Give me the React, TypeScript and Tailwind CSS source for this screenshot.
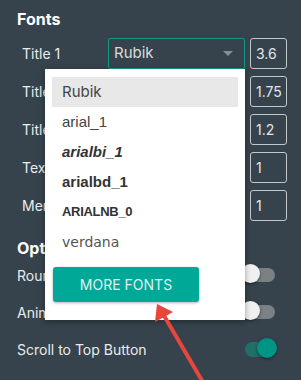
import React from "react";

const fontRows = [
  { label: "Title 1", size: "3.6" },
  { label: "Title 2", size: "1.75" },
  { label: "Title 3", size: "1.2" },
  { label: "Text", size: "1" },
  { label: "Menu", size: "1" },
];

const options = [
  { label: "Rounded Corners", on: false },
  { label: "Animation", on: false },
  { label: "Scroll to Top Button", on: true },
];

function Toggle({ on }: { on: boolean }) {
  return (
    <div className="relative w-[32px] h-[20px] flex items-center">
      <div
        className={
          on
            ? "ml-[2px] w-[28px] h-[15px] rounded-full bg-[#1f7068]"
            : "ml-[5px] w-[27px] h-[14px] rounded-full bg-[#7a8084]"
        }
      />
      <div
        className={
          on
            ? "absolute right-[-2px] top-[-1px] w-[20px] h-[20px] rounded-full bg-[#009485] shadow-[0_1px_3px_rgba(0,0,0,0.5)]"
            : "absolute left-[-2px] top-[-1px] w-[19px] h-[19px] rounded-full bg-[#f0f0f0] shadow-[0_1px_3px_rgba(0,0,0,0.5)]"
        }
      />
    </div>
  );
}

export default function App() {
  return (
    <div className="relative w-[301px] h-[380px] overflow-hidden bg-[#36434c] font-['Inter','Noto_Sans',sans-serif] text-[#e9ecee]">
      <div className="pt-[9px] pl-[17px] pr-[14px]">
        <h2 className="text-[16px] font-bold leading-[20px] text-white">Fonts</h2>

        <div className="mt-[9px] flex flex-col gap-[7px]">
          {fontRows.map((row, i) => (
            <div key={i} className="flex items-center h-[31px]">
              <span className="pl-[5px] w-[91px] text-[14px] whitespace-nowrap overflow-hidden">{row.label}</span>
              {i === 0 ? (
                <div className="w-[137px] h-[31px] border border-[#0f9a88] rounded-[2px] flex items-center justify-between pl-[5px] pr-[11px]">
                  <span className="text-[15px] text-[#d9dcde]">Rubik</span>
                  <span className="w-0 h-0 border-l-[5px] border-r-[5px] border-t-[5px] border-l-transparent border-r-transparent border-t-[#8a8d8f]" />
                </div>
              ) : (
                <div className="w-[137px]" />
              )}
              <div className="ml-[5px] w-[37px] h-[31px] border border-[#c3c8cb] rounded-[3px] flex items-center pl-[5px] text-[14px] text-[#e2e5e7]">
                {row.size}
              </div>
            </div>
          ))}
        </div>

        <h2 className="mt-[17px] text-[16px] font-bold leading-[20px] text-white">Options</h2>

        <div className="mt-[7px] flex flex-col gap-[17px]">
          {options.map((o, i) => (
            <div key={i} className="flex items-center justify-between h-[20px] pr-[12px]">
              <span className="text-[14px] whitespace-nowrap">{o.label}</span>
              <Toggle on={o.on} />
            </div>
          ))}
        </div>
      </div>

      {/* font dropdown menu */}
      <div className="absolute left-[45px] top-[69px] w-[200px] h-[251px] bg-white shadow-[0_2px_6px_rgba(0,0,0,0.35)] pt-[8px] px-[7px]">
        <div className="flex flex-col font-['Liberation_Sans',Arial,sans-serif] text-[15px]">
          <div className="h-[30px] flex items-center pl-[10px] bg-[#e8e8e8] text-[#444] font-['Inter',sans-serif]">Rubik</div>
          <div className="h-[30px] flex items-center pl-[10px] text-[#444]">arial_1</div>
          <div className="h-[30px] flex items-center pl-[10px] text-[#333] font-bold italic">arialbi_1</div>
          <div className="h-[30px] flex items-center pl-[10px] text-[#333] font-bold">arialbd_1</div>
          <div className="h-[30px] flex items-center pl-[10px] text-[#333] font-bold text-[13px] tracking-[-0.3px]">ARIALNB_0</div>
          <div className="h-[30px] flex items-center pl-[10px] text-[#555] font-['DejaVu_Sans',sans-serif] text-[14px]">verdana</div>
        </div>
        <button className="mt-[10px] ml-[1px] w-[146px] h-[35px] rounded-[3px] bg-[#00a898] text-[#dff4f1] text-[14px] font-['Inter',sans-serif] shadow-[0_1px_3px_rgba(0,0,0,0.3)]">
          MORE FONTS
        </button>
      </div>

      {/* annotation arrow */}
      <svg className="absolute left-0 top-0" width="301" height="380" viewBox="0 0 301 380">
        <line x1="204" y1="384" x2="163" y2="314" stroke="#e8453c" strokeWidth="4" />
        <polygon points="157,304 155,322 173,312" fill="#e8453c" />
      </svg>
    </div>
  );
}
